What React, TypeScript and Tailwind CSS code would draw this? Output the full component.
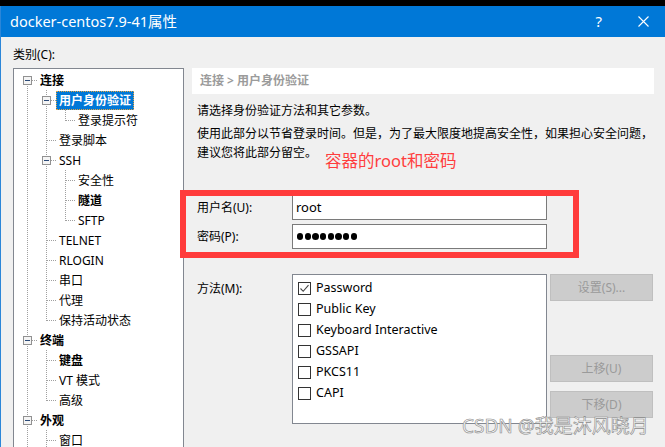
import React from "react";

const FONT = '"Noto Sans", "Noto Sans CJK SC", sans-serif';

type TreeRow = {
  label: string;
  level: number;
  lines: boolean[];
  exp?: boolean;
  bold?: boolean;
  sel?: boolean;
  first?: boolean;
  last?: boolean;
};

const rows: TreeRow[] = [
  { label: "连接", level: 0, lines: [], exp: true, bold: true, first: true },
  { label: "用户身份验证", level: 1, lines: [true], exp: true, bold: true, sel: true },
  { label: "登录提示符", level: 2, lines: [true, true], last: true },
  { label: "登录脚本", level: 1, lines: [true] },
  { label: "SSH", level: 1, lines: [true], exp: true },
  { label: "安全性", level: 2, lines: [true, true] },
  { label: "隧道", level: 2, lines: [true, true], bold: true },
  { label: "SFTP", level: 2, lines: [true, true], last: true },
  { label: "TELNET", level: 1, lines: [true] },
  { label: "RLOGIN", level: 1, lines: [true] },
  { label: "串口", level: 1, lines: [true] },
  { label: "代理", level: 1, lines: [true] },
  { label: "保持活动状态", level: 1, lines: [true], last: true },
  { label: "终端", level: 0, lines: [], exp: true, bold: true },
  { label: "键盘", level: 1, lines: [true], bold: true },
  { label: "VT 模式", level: 1, lines: [true] },
  { label: "高级", level: 1, lines: [true], last: true },
  { label: "外观", level: 0, lines: [], exp: true, bold: true },
  { label: "窗口", level: 1, lines: [true] },
];

const methods = ["Password", "Public Key", "Keyboard Interactive", "GSSAPI", "PKCS11", "CAPI"];

function Cell({ through, own }: { through?: boolean; own?: TreeRow }) {
  return (
    <svg width="19" height="20" className="shrink-0 block">
      {through && (
        <line x1="9.5" y1="0" x2="9.5" y2="20" stroke="#a0a0a0" strokeDasharray="1 1" />
      )}
      {own && (
        <>
          <line
            x1="9.5"
            y1={own.first ? 10 : 0}
            x2="9.5"
            y2={own.last ? 11 : 20}
            stroke="#a0a0a0"
            strokeDasharray="1 1"
          />
          <line x1="10" y1="10.5" x2="19" y2="10.5" stroke="#a0a0a0" strokeDasharray="1 1" />
          {own.exp && (
            <>
              <rect x="5.5" y="6.5" width="8" height="8" fill="#f4f4f4" stroke="#919191" />
              <line x1="7" y1="10.5" x2="12" y2="10.5" stroke="#2b4a78" />
            </>
          )}
        </>
      )}
    </svg>
  );
}

function Tree() {
  return (
    <div className="w-[171px] h-[400px] border border-[#828790] bg-white pl-[4px] pt-[1px] overflow-hidden">
      {rows.map((r, i) => (
        <div key={i} className="flex items-center h-[20px]">
          {r.lines.map((l, k) => (
            <Cell key={k} through={l} />
          ))}
          <Cell own={r} />
          <span
            className={
              "h-[19px] leading-[17px] px-[2px] whitespace-nowrap text-[12px] border " +
              (r.sel
                ? "bg-[#0078d7] text-white border-dotted border-[#e8a33c]"
                : "text-black border-transparent") +
              (r.bold ? " font-bold" : "")
            }
          >
            {r.label}
          </span>
        </div>
      ))}
    </div>
  );
}

function Button({ label, className }: { label: string; className?: string }) {
  return (
    <div
      className={
        "w-[103px] h-[27px] bg-[#cccccc] border border-[#bfbfbf] flex items-center justify-center text-[12px] text-[#9a9a9a] " +
        (className ?? "")
      }
    >
      {label}
    </div>
  );
}

export default function App() {
  return (
    <div
      className="relative w-[665px] h-[447px] overflow-hidden bg-black"
      style={{ fontFamily: FONT }}
    >
      <div className="h-[6px] bg-black" />
      <div className="h-[441px] border-l border-[#2b86d8] bg-[#f0f0f0] flex flex-col overflow-hidden">
        {/* title bar */}
        <div className="h-[31px] shrink-0 bg-[#0078d7] flex items-center pl-[9px] pr-[16px] text-white">
          <span className="text-[14.5px] leading-none">docker-centos7.9-41属性</span>
          <span className="ml-auto text-[15px] leading-none mr-[36px]">?</span>
          <svg width="11" height="11" viewBox="0 0 11 11">
            <path d="M0.5 0.5 L10.5 10.5 M10.5 0.5 L0.5 10.5" stroke="white" strokeWidth="1.1" />
          </svg>
        </div>

        <div className="flex shrink-0">
          {/* left column */}
          <div className="pl-[12px] pt-[10px]">
            <div className="h-[16px] leading-[16px] text-[12px] text-black">类别(C):</div>
            <div className="mt-[5px]">
              <Tree />
            </div>
          </div>

          {/* right panel */}
          <div className="ml-[8px] w-[462px] pt-[31px] text-[12px] text-black">
            <div className="h-[26px] bg-white pl-[8px] flex items-center text-[#9b9b9b] font-semibold">
              连接 &gt; 用户身份验证
            </div>
            <div className="pl-[5px]">
              <p className="mt-[9px] leading-[16px]">请选择身份验证方法和其它参数。</p>
              <p className="mt-[5px] leading-[19px] whitespace-nowrap">
                使用此部分以节省登录时间。但是，为了最大限度地提高安全性，如果担心安全问题，
                <br />
                建议您将此部分留空。
              </p>

              <div className="mt-[33px] flex flex-col gap-[4px]">
                <div className="flex items-center">
                  <span className="w-[95px]">用户名(U):</span>
                  <div className="w-[255px] h-[25px] bg-white border border-[#7a7a7a] flex items-center pl-[3px] text-[13px]">
                    root
                  </div>
                </div>
                <div className="flex items-center">
                  <span className="w-[95px]">密码(P):</span>
                  <div className="w-[255px] h-[25px] bg-white border border-[#7a7a7a] flex items-center pl-[4px] gap-[1.5px]">
                    {Array.from({ length: 8 }).map((_, i) => (
                      <span key={i} className="w-[6.2px] h-[6.2px] rounded-full bg-black" />
                    ))}
                  </div>
                </div>
              </div>

              <div className="mt-[25px] flex items-start">
                <span className="w-[95px] mt-[7px] leading-[16px]">方法(M):</span>
                <div className="w-[255px] h-[150px] bg-white border border-[#828790] pl-[5px] pt-[3px]">
                  {methods.map((m, i) => (
                    <div key={m} className="h-[21px] flex items-center gap-[5px] text-[12.5px]">
                      <span className="w-[13px] h-[13px] border border-[#333333] bg-white flex items-center justify-center">
                        {i === 0 && (
                          <svg width="11" height="11" viewBox="0 0 11 11">
                            <path d="M1.5 5.5 L4.2 8.3 L9.5 2.2" fill="none" stroke="#444" strokeWidth="1.1" />
                          </svg>
                        )}
                      </span>
                      <span className="whitespace-nowrap">{m}</span>
                    </div>
                  ))}
                </div>
                <div className="ml-[3px] flex flex-col">
                  <Button label="设置(S)..." />
                  <Button label="上移(U)" className="mt-[54px]" />
                  <Button label="下移(D)" className="mt-[9px]" />
                </div>
              </div>
            </div>
          </div>
        </div>
      </div>

      {/* annotations drawn over the screenshot */}
      <div className="absolute left-[180px] top-[190px] w-[399px] h-[68px] border-[6px] border-[#ff3b3b]" />
      <div className="absolute left-[325px] top-[151px] text-[16.5px] leading-[20px] text-[#ff3d3d] whitespace-nowrap">
        容器的root和密码
      </div>
      <div className="absolute left-[462px] top-[415px] text-[19px] leading-[22px] text-[#f8f8f8] whitespace-nowrap [-webkit-text-stroke:0.6px_#8a8a8a]">
        CSDN @我是沐风晓月
      </div>
    </div>
  );
}
